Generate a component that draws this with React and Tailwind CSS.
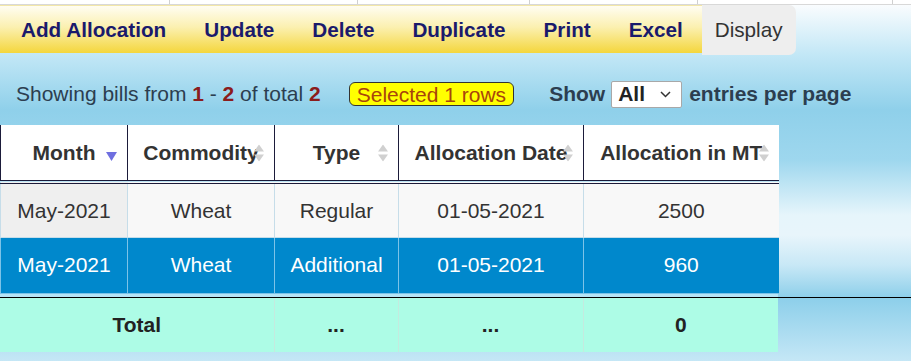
import React from "react";

const SortBoth = () => (
  <svg width="10" height="17" viewBox="0 0 10 17" className="absolute right-[10px] top-1/2 -translate-y-1/2">
    <path d="M5 0 L10 7 L0 7 Z" fill="#d0d0d0" />
    <path d="M5 17 L10 10 L0 10 Z" fill="#d0d0d0" />
  </svg>
);

const SortDesc = () => (
  <svg width="11" height="9" viewBox="0 0 11 9" className="absolute right-[10px] top-[27px]">
    <path d="M0 0 L11 0 L5.5 9 Z" fill="#6f6fe0" />
  </svg>
);

const Toolbar = () => {
  const items = ["Add Allocation", "Update", "Delete", "Duplicate", "Print", "Excel"];
  return (
    <div className="flex items-start">
      <div className="flex items-center h-[48px] pl-[2px] border-t border-[#f3e7a8] bg-[linear-gradient(to_bottom,#fffdf2_0%,#fbf0b0_45%,#f4d63c_100%)]">
        {items.map((item) => (
          <a key={item} className="px-[19px] text-[20.7px] font-bold text-[#1a1a6c] cursor-pointer">
            {item}
          </a>
        ))}
      </div>
      <div className="flex items-center h-[50px] px-[13px] bg-[#eeeeee] rounded-r-[7px] text-[20.7px] text-[#333]">
        Display
      </div>
    </div>
  );
};

const App = () => {
  const head = [
    { label: "Month", w: "w-[127px]", desc: true },
    { label: "Commodity", w: "w-[147px]" },
    { label: "Type", w: "w-[124px]" },
    { label: "Allocation Date", w: "w-[185px]" },
    { label: "Allocation in MT", w: "w-[195px]" },
  ];
  const rows = [
    ["May-2021", "Wheat", "Regular", "01-05-2021", "2500"],
    ["May-2021", "Wheat", "Additional", "01-05-2021", "960"],
  ];
  const selected = 1;

  return (
    <div className="w-[911px] h-[361px] overflow-hidden font-['Liberation_Sans',Arial,sans-serif] bg-[linear-gradient(to_bottom,#ffffff_0px,#f4fafd_10px,#c2e7f6_55px,#8fd0ea_110px,#9ed7ee_160px,#e6f5fb_215px,#e8f5fb_235px,#c8e8f6_265px,#8dcfea_298px,#c5e7f6_361px)]">
      <div className="flex h-[5px] bg-white border-b border-[#d8d8d8]">
        <div className="w-[170px] border-r border-[#d0d0d0]" />
        <div className="w-[188px] border-r border-[#d0d0d0]" />
        <div className="w-[172px] border-r border-[#d0d0d0]" />
        <div className="w-[168px] border-r border-[#d0d0d0]" />
        <div className="w-[195px] border-r border-[#d0d0d0]" />
        <div className="flex-1" />
      </div>

      <Toolbar />

      <div className="flex items-center h-[28px] mt-[25px] mb-[17px] pl-[16px] text-[21px] text-[#2c3e50]">
        <span>
          Showing bills from <b className="text-[#8b1c1c]">1</b> - <b className="text-[#8b1c1c]">2</b> of total{" "}
          <b className="text-[#8b1c1c]">2</b>
        </span>
        <span className="ml-[28px] h-[24px] flex items-center px-[7px] bg-[#ffff00] border border-[#333] rounded-[6px] text-[#a8440c] leading-none">
          Selected 1 rows
        </span>
        <b className="ml-[35px]">Show</b>
        <div className="ml-[6px] w-[71px] h-[27px] flex items-center justify-between pl-[6px] pr-[10px] bg-white border border-[#a8a8a8] rounded-[2px]">
          <b className="text-[#222]">All</b>
          <svg width="11" height="7" viewBox="0 0 11 7">
            <path d="M1 1 L5.5 5.5 L10 1" stroke="#333" strokeWidth="1.5" fill="none" />
          </svg>
        </div>
        <b className="ml-[7px]">entries per page</b>
      </div>

      <table className="w-[778px] table-fixed border-collapse text-[21px]">
        <thead>
          <tr className="bg-white">
            {head.map((h) => (
              <th
                key={h.label}
                className={`${h.w} relative h-[57px] p-0 font-bold text-[#333] border-[#1b1b3a] border-l border-b-[4px] border-double`}
              >
                {h.label}
                {h.desc ? <SortDesc /> : <SortBoth />}
              </th>
            ))}
          </tr>
        </thead>
        <tbody>
          {rows.map((r, ri) => (
            <tr
              key={ri}
              className={ri === selected ? "bg-[#0088cc] text-white" : "bg-[#f8f8f8] text-[#333]"}
            >
              {r.map((c, ci) => (
                <td
                  key={ci}
                  className={`${ri === selected ? "h-[56px]" : "h-[55px]"} p-0 text-center border-l border-b ${
                    ri === selected ? "border-[#7cc3e8]" : "border-[#c6dde9]"
                  } ${ri !== selected && ci === 0 ? "bg-[#efefef]" : ""}`}
                >
                  {c}
                </td>
              ))}
            </tr>
          ))}
        </tbody>
      </table>
      <div className="w-[778px] h-[3px] bg-[#b6e4f6]" />

      <div className="border-t border-black">
        <table className="w-[778px] table-fixed border-collapse text-[21px] font-bold text-[#222]">
          <tbody>
            <tr className="bg-[#adfce6]">
              <td colSpan={2} className="w-[274px] h-[54px] p-0 text-center">
                Total
              </td>
              <td className="w-[124px] p-0 text-center border-l border-[#c4eadf]">...</td>
              <td className="w-[185px] p-0 text-center border-l border-[#c4eadf]">...</td>
              <td className="w-[195px] p-0 text-center border-l border-[#c4eadf]">0</td>
            </tr>
          </tbody>
        </table>
      </div>
    </div>
  );
};

export default App;
